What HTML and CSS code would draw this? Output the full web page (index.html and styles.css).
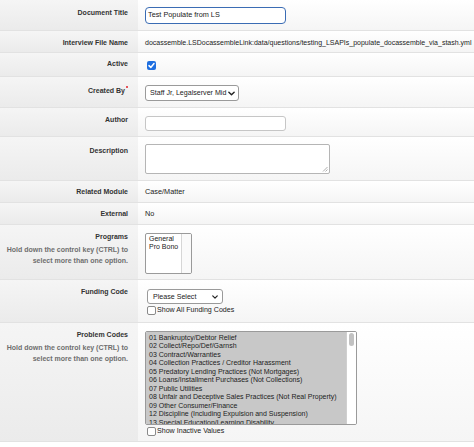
FILE: index.html
```html
<!DOCTYPE html>
<html>
<head>
<meta charset="utf-8">
<link rel="stylesheet" href="styles.css">
</head>
<body>
<div class="form">
  <div class="row row-title">
    <div class="label lp9">Document Title</div>
    <div class="value vp7"><div class="input input-focus">Test Populate from LS</div></div>
  </div>
  <div class="row row-22">
    <div class="label">Interview File Name</div>
    <div class="value vp8 file-line">docassemble.LSDocassembleLink:data/questions/testing_LSAPIs_populate_docassemble_via_stash.yml</div>
  </div>
  <div class="row row-active">
    <div class="label lp7">Active</div>
    <div class="value vp8"><span class="check checked"><svg viewBox="0 0 9 9" width="9" height="9"><path d="M2 4.6 L3.8 6.4 L7 2.6" fill="none" stroke="#fff" stroke-width="1.5" stroke-linecap="round" stroke-linejoin="round"/></svg></span></div>
  </div>
  <div class="row row-created">
    <div class="label lp10">Created By<span class="req"></span></div>
    <div class="value vp8"><div class="select select-created"><span class="sel-text">Staff Jr, Legalserver Mid</span><svg class="chev" viewBox="0 0 8 5" width="7" height="5"><path d="M1 1 L4 4 L7 1" fill="none" stroke="#222" stroke-width="1.6" stroke-linecap="round" stroke-linejoin="round"/></svg></div></div>
  </div>
  <div class="row row-author">
    <div class="label">Author</div>
    <div class="value vp8"><div class="input input-author"></div></div>
  </div>
  <div class="row row-desc">
    <div class="label lp10">Description</div>
    <div class="value vp7"><div class="textarea"><svg class="grip" viewBox="0 0 6 6" width="6" height="6"><path d="M1 5.5 L5.5 1 M3.5 5.5 L5.5 3.5" stroke="#999" stroke-width="0.8"/></svg></div></div>
  </div>
  <div class="row row-22">
    <div class="label lp7">Related Module</div>
    <div class="value vp7 text">Case/Matter</div>
  </div>
  <div class="row row-22">
    <div class="label lp7">External</div>
    <div class="value vp7 text">No</div>
  </div>
  <div class="row row-programs">
    <div class="label">Programs<div class="help">Hold down the control key (CTRL) to<br>select more than one option.</div></div>
    <div class="value vp8">
      <div class="listbox list-programs">
        <div class="opts"><div>General</div><div>Pro Bono</div></div>
        <div class="track"></div>
      </div>
    </div>
  </div>
  <div class="row row-funding">
    <div class="label">Funding Code</div>
    <div class="value vp9">
      <div class="select select-funding"><span class="sel-text">Please Select</span><svg class="chev" viewBox="0 0 8 5" width="6" height="4"><path d="M1 1 L4 4 L7 1" fill="none" stroke="#222" stroke-width="1.6" stroke-linecap="round" stroke-linejoin="round"/></svg></div>
      <div class="checkline"><span class="check"></span>Show All Funding Codes</div>
    </div>
  </div>
  <div class="row row-problem">
    <div class="label">Problem Codes<div class="help">Hold down the control key (CTRL) to<br>select more than one option.</div></div>
    <div class="value vp8">
      <div class="listbox list-problem">
        <div class="opts">
          <div>01 Bankruptcy/Debtor Relief</div>
          <div>02 Collect/Repo/Def/Garnsh</div>
          <div>03 Contract/Warranties</div>
          <div>04 Collection Practices / Creditor Harassment</div>
          <div>05 Predatory Lending Practices (Not Mortgages)</div>
          <div>06 Loans/Installment Purchases (Not Collections)</div>
          <div>07 Public Utilities</div>
          <div>08 Unfair and Deceptive Sales Practices (Not Real Property)</div>
          <div>09 Other Consumer/Finance</div>
          <div>12 Discipline (Including Expulsion and Suspension)</div>
          <div>13 Special Education/Learning Disability</div>
        </div>
        <div class="track"><div class="thumb"></div></div>
      </div>
      <div class="checkline"><span class="check"></span>Show Inactive Values</div>
    </div>
  </div>
</div>
</body>
</html>
```

FILE: styles.css
```css
html, body {
  margin: 0;
  padding: 0;
  background: #fff;
}
body {
  font-family: "Liberation Sans", Arial, Helvetica, sans-serif;
  color: #222;
}
.form {
  width: 474px;
}
.row {
  display: flex;
  box-sizing: border-box;
  border-bottom: 1px solid #e2e2e2;
}
.row-title { height: 31px; }
.row-22 { height: 22px; }
.row-active { height: 24px; }
.row-created { height: 31px; }
.row-author { height: 29px; }
.row-desc { height: 44px; }
.row-programs { height: 55px; }
.row-funding { height: 43px; }
.row-problem { height: 119px; }

.label {
  width: 138px;
  flex: none;
  box-sizing: border-box;
  padding: 8px 10px 0 0;
  text-align: right;
  font-size: 7px;
  line-height: 8px;
  font-weight: bold;
  color: #333;
  background: linear-gradient(#f5f5f5, #ebebeb);
}
.lp7 { padding-top: 7px; }
.lp9 { padding-top: 9px; }
.lp10 { padding-top: 10px; }
.help {
  color: #6e6e6e;
  margin-top: 3px;
  line-height: 11px;
}
.req {
  display: inline-block;
  width: 2px;
  height: 2px;
  border-radius: 50%;
  background: #e0202a;
  vertical-align: top;
  margin-left: 1px;
  margin-top: -1px;
}
.value {
  flex: 1;
  box-sizing: border-box;
  padding: 8px 0 0 7px;
  font-size: 7.3px;
  line-height: 8px;
  background: linear-gradient(#ffffff, #f5f5f5);
  min-width: 0;
}
.vp7 { padding-top: 7px; }
.vp8 { padding-top: 8px; }
.vp9 { padding-top: 9px; }
.text { color: #222; }
.file-line {
  white-space: nowrap;
  font-size: 7px;
}

.input {
  box-sizing: border-box;
  width: 141px;
  background: #fff;
  border: 1px solid #c6c6c6;
  border-radius: 3px;
  font-size: 7.3px;
  line-height: 13px;
  padding: 0 3px;
}
.input-focus {
  height: 17px;
  border: 1.5px solid #3a6cb4;
  border-radius: 4px;
  line-height: 14px;
  padding-left: 2px;
}
.input-author {
  height: 15px;
}
.textarea {
  position: relative;
  box-sizing: border-box;
  width: 185px;
  height: 30px;
  background: #fff;
  border: 1px solid #b5b5b5;
  border-radius: 2px;
}
.grip {
  position: absolute;
  right: 1px;
  bottom: 1px;
}

.select {
  box-sizing: border-box;
  display: flex;
  align-items: center;
  justify-content: space-between;
  background: #fff;
  border: 1px solid #9a9a9a;
  border-radius: 3px;
  font-size: 7.1px;
  color: #222;
}
.sel-text {
  white-space: nowrap;
}
.select-created {
  width: 94px;
  height: 16px;
  padding: 0 3px 0 4px;
}
.select-funding {
  width: 76px;
  height: 15px;
  margin-left: 2px;
  padding: 0 4px 0 5px;
}
.chev { flex: none; }

.check {
  display: inline-block;
  box-sizing: border-box;
  width: 9px;
  height: 9px;
  border: 1px solid #8a8a8a;
  border-radius: 2px;
  background: #fff;
  vertical-align: top;
  margin-left: 2px;
}
.check.checked {
  border: none;
  background: #1f6fe0;
}
.check.checked svg { display: block; }
.checkline {
  display: flex;
  align-items: center;
  gap: 1px;
  margin-top: 2px;
  font-size: 7.1px;
  line-height: 9px;
  color: #222;
}

.listbox {
  display: flex;
  box-sizing: border-box;
  border: 1px solid #9a9a9a;
  border-radius: 2px;
  background: #fff;
  overflow: hidden;
}
.listbox .opts {
  flex: 1;
  overflow: hidden;
  padding: 2px 0 0 3px;
  font-size: 7px;
  line-height: 8.45px;
  white-space: nowrap;
}
.listbox .track {
  width: 9px;
  flex: none;
  border-left: 1px solid #d6d6d6;
  background: #fafafa;
  position: relative;
}
.list-programs {
  width: 47px;
  height: 41px;
}
.list-programs .opts {
  padding-top: 1px;
}
.list-problem {
  width: 212px;
  height: 94px;
}
.list-problem .opts {
  background: #c8c8c8;
  padding-top: 2px;
}
.list-problem .track {
  background: #fff;
  border-left: 1px solid #cfcfcf;
}
.thumb {
  position: absolute;
  left: 2px;
  top: 1px;
  width: 5px;
  height: 13px;
  border-radius: 3px;
  background: #c2c2c2;
}
```
